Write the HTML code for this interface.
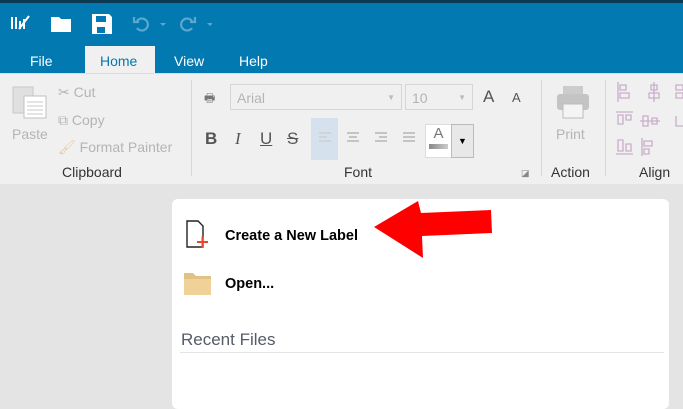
<!DOCTYPE html>
<html><head><style>
body{margin:0;width:683px;height:401px;overflow:hidden;background:#e4e4e4;font-family:"Liberation Sans",sans-serif;position:relative}
.a{position:absolute}
.top{left:0;top:0;width:683px;height:73px;background:#0279b0;border-top:3px solid #0b3a55;box-sizing:border-box}
.tab{top:53px;color:#fff;font-size:14px}
.rib{left:0;top:73px;width:683px;height:111px;background:#f0f0f0;border-top:1px solid #dcdcdc;box-sizing:border-box}
.g{color:#b4b4b4;font-size:14px}
.lbl{color:#333;font-size:14px;top:164px}
.sep{width:1px;background:#d8d8d8;top:80px;height:96px}
.card{left:172px;top:199px;width:497px;height:210px;background:#fff;border-radius:6px}
</style></head><body>
<div class="a top"></div>
<svg class="a" style="left:10px;top:13px" width="22" height="20"><g stroke="#fff" stroke-width="2" fill="none"><path d="M2 4v12M6 4v12M10 8v8M14 6v10"/><path d="M9 16L19 3"/></g></svg>
<svg class="a" style="left:50px;top:15px" width="22" height="18"><path d="M1 2h8l2 2h10v13H1z" fill="#fff"/></svg>
<svg class="a" style="left:91px;top:13px" width="22" height="22"><path d="M1 1h17l3 3v17H1z" fill="#fff"/><rect x="5" y="3" width="10" height="6" fill="#0279b0"/><rect x="6" y="14" width="8" height="6" fill="#0279b0"/></svg>
<svg class="a" style="left:132px;top:14px" width="80" height="18"><g stroke="#5aa7cf" stroke-width="2.2" fill="none"><path d="M5 7a6 6 0 1 1 0 7"/><path d="M2 3v5h5"/><path d="M60 7a6 6 0 1 0 0 7"/><path d="M63 3v5h-5"/></g><path d="M28 9h6l-3 3z M75 9h6l-3 3z" fill="#5aa7cf"/></svg>
<div class="a tab" style="left:30px">File</div>
<div class="a" style="left:85px;top:46px;width:70px;height:28px;background:#f0f0f0"></div>
<div class="a tab" style="left:100px;color:#0279b0">Home</div>
<div class="a tab" style="left:174px">View</div>
<div class="a tab" style="left:239px">Help</div>
<div class="a rib"></div>
<svg class="a" style="left:12px;top:84px" width="38" height="36"><rect x="1" y="3" width="20" height="26" fill="#e0e0e0" stroke="#c8c8c8"/><rect x="12" y="12" width="22" height="22" fill="#fff" stroke="#c0c0c0"/><g stroke="#c8c8c8"><path d="M15 18h16M15 22h16M15 26h16M15 30h16"/></g></svg>
<div class="a g" style="left:12px;top:126px">Paste</div>
<div class="a g" style="left:58px;top:84px">✂&nbsp;Cut</div>
<div class="a g" style="left:58px;top:112px">⧉&nbsp;Copy</div>
<div class="a g" style="left:58px;top:139px"><span style="color:#e8c9a8">🖌</span> Format Painter</div>
<div class="a lbl" style="left:62px">Clipboard</div>
<div class="a sep" style="left:191px"></div>
<div class="a" style="left:204px;top:89px;font-size:12px;color:#777">🖶</div>
<div class="a" style="left:230px;top:84px;width:172px;height:26px;border:1px solid #d6d6d6;box-sizing:border-box"><span class="g" style="position:absolute;left:6px;top:5px">Arial</span><span style="position:absolute;right:6px;top:8px;font-size:8px;color:#bbb">▼</span></div>
<div class="a" style="left:405px;top:84px;width:68px;height:26px;border:1px solid #d6d6d6;box-sizing:border-box"><span class="g" style="position:absolute;left:6px;top:5px">10</span><span style="position:absolute;right:6px;top:8px;font-size:8px;color:#bbb">▼</span></div>
<div class="a" style="left:483px;top:87px;font-size:17px;color:#555">A</div>
<div class="a" style="left:512px;top:90px;font-size:13px;color:#555">A</div>
<div class="a" style="left:205px;top:129px;font-size:17px;font-weight:bold;color:#555">B</div>
<div class="a" style="left:235px;top:129px;font-size:17px;font-style:italic;color:#555;font-family:'Liberation Serif'">I</div>
<div class="a" style="left:260px;top:129px;font-size:17px;text-decoration:underline;color:#555">U</div>
<div class="a" style="left:287px;top:129px;font-size:17px;text-decoration:line-through;color:#555">S</div>
<div class="a" style="left:311px;top:118px;width:27px;height:42px;background:#d5e1ec"></div>
<svg class="a" style="left:316px;top:131px" width="100" height="14"><g stroke="#aaa" stroke-width="1.3"><path d="M3 2h12M3 6h8M3 10h12" stroke="#ccc"/><path d="M31 2h12M33 6h8M31 10h12"/><path d="M59 2h12M63 6h8M59 10h12"/><path d="M87 2h12M87 6h12M87 10h12"/></g></svg>
<div class="a" style="left:425px;top:124px;width:27px;height:34px;background:#fff;border:1px solid #ddd;box-sizing:border-box;font-size:15px;color:#777;text-align:center">A<div style="height:5px;margin:2px 3px;background:linear-gradient(90deg,#888,#ccc)"></div></div>
<div class="a" style="left:451px;top:124px;width:23px;height:34px;background:#e8e8e8;border:1px solid #bbb;box-sizing:border-box;font-size:9px;text-align:center;line-height:32px">▼</div>
<div class="a lbl" style="left:344px">Font</div>
<div class="a" style="left:521px;top:168px;font-size:9px;color:#888">◪</div>
<div class="a sep" style="left:541px"></div>
<svg class="a" style="left:555px;top:84px" width="36" height="36"><rect x="8" y="2" width="20" height="8" fill="#ccc"/><rect x="2" y="10" width="32" height="16" rx="3" fill="#c4c4c4"/><rect x="8" y="20" width="20" height="14" fill="#f4f4f4" stroke="#bbb"/></svg>
<div class="a g" style="left:556px;top:126px">Print</div>
<div class="a lbl" style="left:551px">Action</div>
<div class="a sep" style="left:605px"></div>
<svg class="a" style="left:614px;top:80px" width="69" height="80"><g fill="none" stroke="#c9aec9" stroke-width="1.3"><path d="M4 2v20M6 5h6v5H6zM6 13h9v5H6z"/><path d="M40 2v20M37 5h6v5h-6zM35 13h10v5H35z"/><path d="M62 5h7v5h-7zM62 13h7v5h-7z"/><path d="M2 32h17M4 35h5v9H4zM12 35h5v5h-5z"/><path d="M26 41h20M29 36h5v10h-5zM38 38h5v6h-5z"/><path d="M62 36v10h7"/><path d="M2 74h17M4 60h5v11H4zM12 64h5v7h-5z"/><path d="M28 58v18M30 61h8v5h-8zM30 69h5v5h-5z"/></g></svg>
<div class="a lbl" style="left:639px">Align</div>
<div class="a card"></div>
<svg class="a" style="left:184px;top:220px" width="30" height="30"><path d="M3 1h11l5 5v21H3z" fill="none" stroke="#222" stroke-width="1.4"/><path d="M13 22h11M18.5 16.5v11" stroke="#e8452e" stroke-width="2"/></svg>
<div class="a" style="left:225px;top:228px;font-size:14.5px;font-weight:bold;color:#000">Create a New Label</div>
<svg class="a" style="left:183px;top:270px" width="30" height="26"><path d="M1 3h9l3 3h15v19H1z" fill="#e2c184"/><path d="M1 9h27v16H1z" fill="#f0d198"/></svg>
<div class="a" style="left:225px;top:276px;font-size:14.5px;font-weight:bold;color:#000">Open...</div>
<div class="a" style="left:181px;top:330px;font-size:17px;color:#555c66">Recent Files</div>
<div class="a" style="left:180px;top:352px;width:484px;height:1px;background:#e4e4e4"></div>
<svg class="a" style="left:370px;top:198px" width="125" height="62"><path d="M4 29L48 3L51 15L121 12L122 35L52 38L53 60Z" fill="#f00"/></svg>
</body></html>
